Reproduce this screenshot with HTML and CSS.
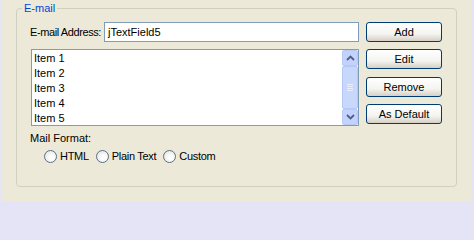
FILE: index.html
```html
<!DOCTYPE html>
<html>
<head>
<meta charset="utf-8">
<link rel="stylesheet" href="styles.css">
</head>
<body>
<div class="frame">
  <fieldset class="group">
    <legend class="title">E-mail</legend>
    <div class="content">
      <div class="main">
        <div class="leftcol">
          <div class="addr-row">
            <span class="addr-label">E-mail Address:</span>
            <div class="textfield">jTextField5</div>
          </div>
          <div class="list">
            <div class="items">
              <div class="item">Item 1</div>
              <div class="item">Item 2</div>
              <div class="item">Item 3</div>
              <div class="item">Item 4</div>
              <div class="item">Item 5</div>
            </div>
            <div class="scrollbar">
              <div class="sb-btn">
                <svg width="9" height="6" viewBox="0 0 9 6"><path d="M1 5 L4.5 1.5 L8 5" fill="none" stroke="#4d6185" stroke-width="1.8"/></svg>
              </div>
              <div class="sb-thumb">
                <div class="grip"></div><div class="grip"></div><div class="grip"></div><div class="grip"></div>
              </div>
              <div class="sb-btn">
                <svg width="9" height="6" viewBox="0 0 9 6"><path d="M1 1 L4.5 4.5 L8 1" fill="none" stroke="#4d6185" stroke-width="1.8"/></svg>
              </div>
            </div>
          </div>
        </div>
        <div class="buttons">
          <div class="btn">Add</div>
          <div class="btn">Edit</div>
          <div class="btn">Remove</div>
          <div class="btn">As Default</div>
        </div>
      </div>
      <div class="format-label">Mail Format:</div>
      <div class="radios">
        <label class="radio"><span class="circle"></span>HTML</label>
        <label class="radio"><span class="circle"></span>Plain Text</label>
        <label class="radio"><span class="circle"></span>Custom</label>
      </div>
    </div>
  </fieldset>
</div>
</body>
</html>
```

FILE: styles.css
```css
html, body {
  margin: 0;
  padding: 0;
}
html {
  background: #e4e4f6;
}
body {
  width: 474px;
  height: 204px;
  font-family: "Liberation Sans", Arial, sans-serif;
  font-size: 11px;
  color: #000;
  padding: 0 3px 3px 2px;
  box-sizing: border-box;
}
.frame {
  background: #ece9d8;
  height: 201px;
  padding: 2px 14px 0 14px;
  box-sizing: border-box;
}
.group {
  margin: 0;
  padding: 0;
  border: 1px solid #d0d0bf;
  border-radius: 4px;
  height: 185px;
  box-sizing: border-box;
  min-width: 0;
}
.title {
  color: #0046d5;
  padding: 0 2px;
  margin-left: 5px;
  line-height: 13px;
}
.content {
  padding: 7px 14px 0 13px;
}
.main {
  display: flex;
  gap: 7px;
}
.leftcol {
  display: flex;
  flex-direction: column;
  gap: 7px;
  width: 329px;
}
.addr-row {
  display: flex;
  align-items: center;
  height: 20px;
}
.addr-label {
  width: 74px;
  flex-shrink: 0;
  white-space: nowrap;
  letter-spacing: -0.4px;
}
.textfield {
  width: 255px;
  flex-shrink: 0;
  height: 20px;
  box-sizing: border-box;
  border: 1px solid #7f9db9;
  background: #fff;
  padding: 0 3px;
  line-height: 18px;
}
.list {
  margin-left: 1px;
  width: 328px;
  height: 77px;
  box-sizing: border-box;
  border: 1px solid #7f9db9;
  background: #fff;
  display: flex;
}
.items {
  flex: 1;
  padding: 1px 0 0 2px;
}
.item {
  height: 15px;
  line-height: 15px;
}
.scrollbar {
  width: 16px;
  display: flex;
  flex-direction: column;
  background: #fdfdfa;
}
.sb-btn {
  height: 16px;
  box-sizing: border-box;
  border: 1px solid #b7caf5;
  border-radius: 2px;
  background: #c3d3fd;
  display: flex;
  align-items: center;
  justify-content: center;
}
.sb-thumb {
  flex: 1;
  box-sizing: border-box;
  border: 1px solid #b4c8f6;
  border-radius: 2px;
  background: #c8d8fc;
  display: flex;
  flex-direction: column;
  align-items: center;
  justify-content: center;
  gap: 1px;
}
.grip {
  width: 6px;
  height: 1px;
  background: #e6eeff;
}
.buttons {
  display: flex;
  flex-direction: column;
  gap: 7.33px;
}
.btn {
  width: 76px;
  height: 20px;
  box-sizing: border-box;
  border: 1px solid #003c74;
  border-radius: 3px;
  background: linear-gradient(#ffffff, #f4f4f0 60%, #d6d0c5);
  text-align: center;
  line-height: 18px;
}
.format-label {
  margin-top: 5px;
  height: 14px;
  line-height: 14px;
}
.radios {
  display: flex;
  align-items: center;
  gap: 7px;
  margin-top: 4px;
  padding-left: 14px;
  height: 14px;
}
.radio {
  display: flex;
  align-items: center;
  gap: 3px;
  letter-spacing: -0.3px;
}
.circle {
  width: 11px;
  height: 11px;
  border-radius: 50%;
  border: 1px solid #5b6f88;
  background: radial-gradient(circle at 60% 60%, #ffffff 20%, #dcdcd6 100%);
}
```
